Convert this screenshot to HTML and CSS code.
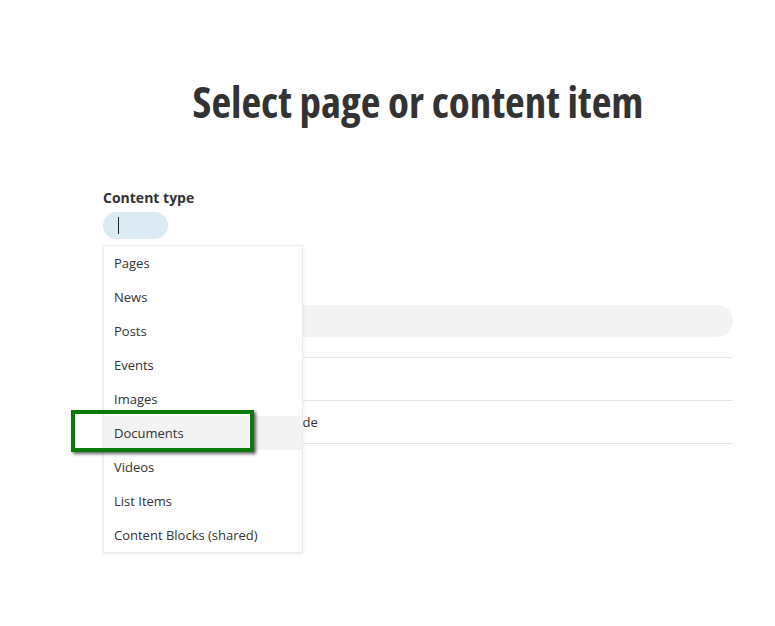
FILE: index.html
```html
<!DOCTYPE html>
<html lang="en">
<head>
<meta charset="utf-8">
<title>Select page or content item</title>
<link rel="stylesheet" href="styles.css">
</head>
<body>
<main class="page">
  <h1 class="title">Select page or content item</h1>
  <div class="field">
    <div class="label">Content type</div>
    <div class="select-wrap">
      <div class="pill-input"><span class="caret"></span></div>
      <ul class="dropdown">
        <li class="option">Pages</li>
        <li class="option">News</li>
        <li class="option">Posts</li>
        <li class="option">Events</li>
        <li class="option">Images</li>
        <li class="option option-hover">Documents<span class="annotation"></span></li>
        <li class="option">Videos</li>
        <li class="option">List Items</li>
        <li class="option">Content Blocks (shared)</li>
      </ul>
    </div>
  </div>
  <div class="results">
    <div class="search-bar"></div>
    <div class="row"></div>
    <div class="row"><span class="cell-type">Document</span><span class="cell-title">Quick start guide</span></div>
  </div>
</main>
</body>
</html>
```

FILE: styles.css
```css
html, body {
  margin: 0;
  padding: 0;
  background: #ffffff;
}
body {
  font-family: "Open Sans", "Liberation Sans", sans-serif;
  color: #333333;
}
.page {
  box-sizing: border-box;
  width: 630px;
  margin-left: 103px;
  padding-top: 74px;
  min-height: 626px;
}
.title {
  margin: 0;
  text-align: center;
  font-family: "Open Sans", "DejaVu Sans Condensed", sans-serif;
  font-stretch: 75%;
  font-weight: 700;
  font-size: 43px;
  line-height: 56px;
  color: #333333;
}
.field {
  margin-top: 58px;
}
.label {
  font-size: 14px;
  font-weight: 700;
  line-height: 20px;
  color: #333333;
}
.select-wrap {
  position: relative;
  z-index: 5;
  margin-top: 4px;
}
.pill-input {
  width: 65px;
  height: 27px;
  border-radius: 14px;
  background: #dbeaf3;
  display: flex;
  align-items: center;
  padding-left: 15px;
  box-sizing: border-box;
}
.caret {
  width: 1px;
  height: 17px;
  background: #222;
}
.dropdown {
  position: absolute;
  top: 33px;
  left: 0;
  width: 200px;
  box-sizing: border-box;
  margin: 0;
  padding: 0;
  list-style: none;
  background: #fff;
  border: 1px solid #ececec;
  box-shadow: 0 1px 3px rgba(0, 0, 0, 0.08);
}
.option {
  position: relative;
  height: 34px;
  line-height: 34px;
  padding-left: 10px;
  font-size: 13px;
  color: #333333;
}
.option-hover {
  background: #f3f3f3;
}
.annotation {
  position: absolute;
  left: -33px;
  top: -6px;
  width: 183px;
  height: 42px;
  box-sizing: border-box;
  border: 4px solid #0b7a0b;
  box-shadow: 2px 2px 3px rgba(0, 0, 0, 0.6);
}
.results {
  margin-top: 66px;
}
.search-bar {
  height: 32px;
  border-radius: 16px;
  background: #f3f3f3;
  margin-bottom: 20px;
}
.row {
  height: 42px;
  border-top: 1px solid #e6e6e6;
  display: flex;
  align-items: center;
  font-size: 13px;
  color: #333333;
}
.row:last-child {
  border-bottom: 1px solid #e6e6e6;
}
.cell-type {
  width: 102px;
  padding-left: 10px;
}
```
